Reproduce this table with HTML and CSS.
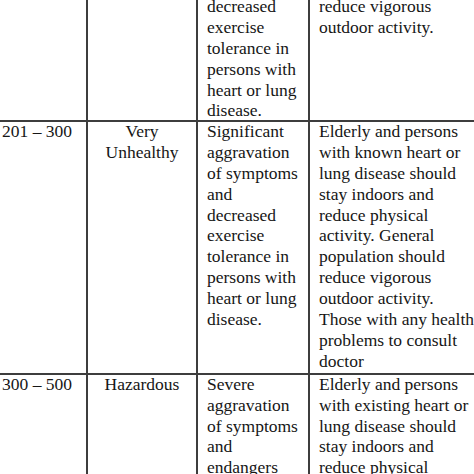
FILE: index.html
```html
<!DOCTYPE html>
<html lang="en">
<head>
<meta charset="utf-8">
<title>AQI health effects</title>
<link rel="stylesheet" href="styles.css">
</head>
<body>
<div class="aqi-table">
  <div class="cell range"><p></p></div>
  <div class="cell category"><p></p></div>
  <div class="cell effect"><p>decreased<br>exercise<br>tolerance in<br>persons with<br>heart or lung<br>disease.</p></div>
  <div class="cell advice"><p>reduce vigorous<br>outdoor activity.</p></div>

  <div class="cell range tall"><p>201 – 300</p></div>
  <div class="cell category tall"><p>Very<br>Unhealthy</p></div>
  <div class="cell effect tall"><p>Significant<br>aggravation<br>of symptoms<br>and<br>decreased<br>exercise<br>tolerance in<br>persons with<br>heart or lung<br>disease.</p></div>
  <div class="cell advice tall"><p>Elderly and persons<br>with known heart or<br>lung disease should<br>stay indoors and<br>reduce physical<br>activity. General<br>population should<br>reduce vigorous<br>outdoor activity.<br>Those with any health<br>problems to consult<br>doctor</p></div>

  <div class="cell range"><p>300 – 500</p></div>
  <div class="cell category"><p>Hazardous</p></div>
  <div class="cell effect"><p>Severe<br>aggravation<br>of symptoms<br>and<br>endangers</p></div>
  <div class="cell advice"><p>Elderly and persons<br>with existing heart or<br>lung disease should<br>stay indoors and<br>reduce physical</p></div>
</div>
</body>
</html>
```
FILE: styles.css
```css
html, body {
  margin: 0;
  padding: 0;
  background: #ffffff;
  overflow: hidden;
}

body {
  width: 474px;
  height: 474px;
}

.aqi-table {
  display: grid;
  grid-template-columns: 98px 108px 110px 180px;
  gap: 2px;
  padding: 2px;
  width: max-content;
  margin: -4.8px 0 0 -14px;
  background: #3d3d3d;
  font-family: "Liberation Serif", "Times New Roman", serif;
  font-size: 17.5px;
  line-height: 20.84px;
  color: #161616;
}

.cell {
  background: #ffffff;
  white-space: nowrap;
}

.cell p {
  margin: -1px 0 -1px;
}

.cell.tall {
  padding-bottom: 2.5px;
}

.range {
  padding-left: 14px;
}

.category {
  text-align: center;
}

.effect,
.advice {
  padding-left: 9px;
}
```
